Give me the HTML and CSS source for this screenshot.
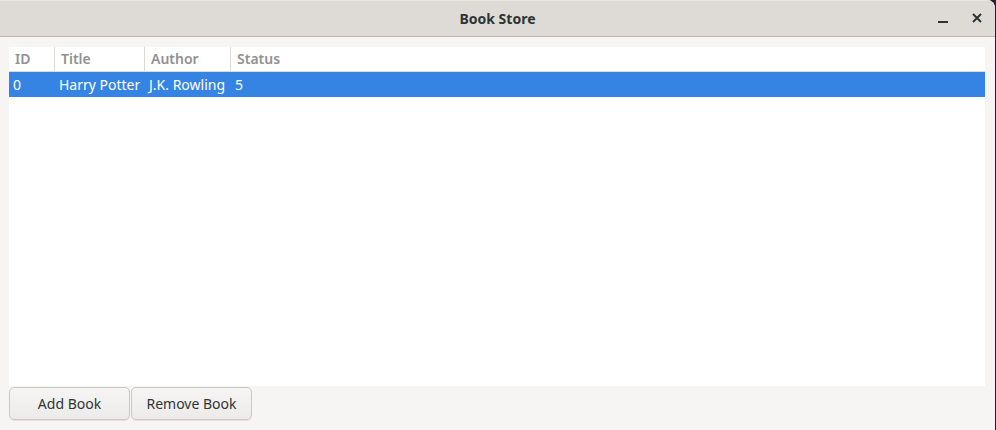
FILE: index.html
```html
<!DOCTYPE html>
<html>
<head>
<meta charset="utf-8">
<link rel="stylesheet" href="styles.css">
</head>
<body>
<div class="window">
  <div class="titlebar">
    <div class="title">Book Store</div>
    <div class="controls">
      <svg class="ctl" width="16" height="16" viewBox="0 0 16 16"><rect x="3" y="11" width="10" height="2" fill="#2e3436"/></svg>
      <svg class="ctl" width="16" height="16" viewBox="0 0 16 16"><path d="M4 4L12 12M12 4L4 12" stroke="#2e3436" stroke-width="2" fill="none"/></svg>
    </div>
  </div>
  <div class="content">
    <div class="tree">
      <div class="hdr">
        <div class="hc c-id">ID</div>
        <div class="hc c-title">Title</div>
        <div class="hc c-author">Author</div>
        <div class="hc c-status">Status</div>
      </div>
      <div class="row sel">
        <div class="cell c-id">0</div>
        <div class="cell c-title">Harry Potter</div>
        <div class="cell c-author">J.K. Rowling</div>
        <div class="cell c-status">5</div>
      </div>
    </div>
    <div class="buttons">
      <button class="btn">Add Book</button>
      <button class="btn">Remove Book</button>
    </div>
  </div>
</div>
</body>
</html>
```
FILE: styles.css
```css
html, body { margin: 0; padding: 0; }
body {
  width: 996px; height: 430px; overflow: hidden;
  background: #2a1d2c;
  font-family: "Noto Sans", "Open Sans", sans-serif;
  font-size: 14px;
}
.window {
  width: 995px; height: 430px;
  background: #f6f5f4;
  border-top-right-radius: 8px;
  overflow: hidden;
  display: flex; flex-direction: column;
}
.titlebar {
  flex: none;
  background: #dedbd7;
  border-top: 1px solid #e8e6e3;
  box-sizing: border-box;
  border-bottom: 1px solid #bfb8b1;
  height: 37px;
  display: flex; align-items: center; justify-content: center;
  position: relative;
}
.title { font-weight: bold; color: #2e3436; font-size: 14px; }
.controls {
  position: absolute; right: 10px; top: 9px;
  display: flex; gap: 18px;
}
.content {
  flex: 1; display: flex; flex-direction: column;
  padding: 10px 10px 0 9px;
}
.tree {
  background: #fff; height: 339px; width: 976px;
}
.hdr { display: flex; height: 25px; border-bottom: 1px solid #dcdad5; box-sizing: border-box; }
.hc {
  color: #919191; font-weight: 600;
  padding-left: 6px; line-height: 24px;
  border-right: 1px solid #dcdad5; box-sizing: border-box;
}
.hc.c-status { border-right: none; }
.c-id { width: 46px; }
.c-title { width: 90px; }
.c-author { width: 86px; }
.c-status { flex: 1; }
.row { display: flex; height: 25px; }
.row.sel { background: #3584e4; color: #fff; }
.cell { padding-left: 4px; line-height: 25px; white-space: nowrap; box-sizing: border-box; }
.buttons { display: flex; gap: 1px; margin-top: 1px; }
.btn {
  width: 121px; height: 33px;
  font-family: inherit; font-size: 14px; color: #2e3436;
  background: linear-gradient(#f6f5f4, #edebe9);
  border: 1px solid #cdc7c2; border-radius: 5px;
  box-shadow: 0 1px rgba(0,0,0,0.07);
  padding: 0;
}
```
